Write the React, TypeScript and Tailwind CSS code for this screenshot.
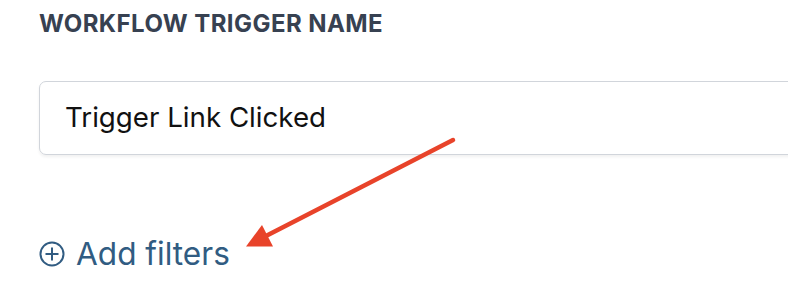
import React from "react";

export default function App() {
  return (
    <div
      className="relative w-[788px] h-[306px] bg-white overflow-hidden"
      style={{ fontFamily: "Inter, 'Noto Sans', sans-serif" }}
    >
      <div className="pl-[39px] pt-[12px] flex flex-col">
        <div className="text-[24px] leading-none font-bold tracking-[0.018em] text-[#374151] uppercase">
          Workflow Trigger Name
        </div>
        <div className="mt-[45px] w-[800px] h-[74px] border border-[#d1d5db] rounded-[7px] shadow-[0_2px_3px_rgba(0,0,0,0.06)] flex items-center pl-[25px]">
          <span className="text-[27.7px] leading-none text-[#111111]">Trigger Link Clicked</span>
        </div>
        <div className="mt-[83px] flex items-center gap-[11px] text-[#315c82]">
          <svg width="26" height="26" viewBox="0 0 26 26" fill="none" stroke="currentColor" strokeWidth="2">
            <circle cx="13" cy="13" r="11.5" />
            <path d="M13 6.5v13M6.5 13h13" />
          </svg>
          <span className="text-[31.6px] leading-none">Add filters</span>
        </div>
      </div>
      <svg className="absolute left-0 top-0 pointer-events-none" width="788" height="306" viewBox="0 0 788 306">
        <line x1="453" y1="140" x2="262" y2="238" stroke="#e8432a" strokeWidth="4.5" strokeLinecap="round" />
        <polygon points="246,246.5 262,225 273,246.5" fill="#e8432a" />
      </svg>
    </div>
  );
}
